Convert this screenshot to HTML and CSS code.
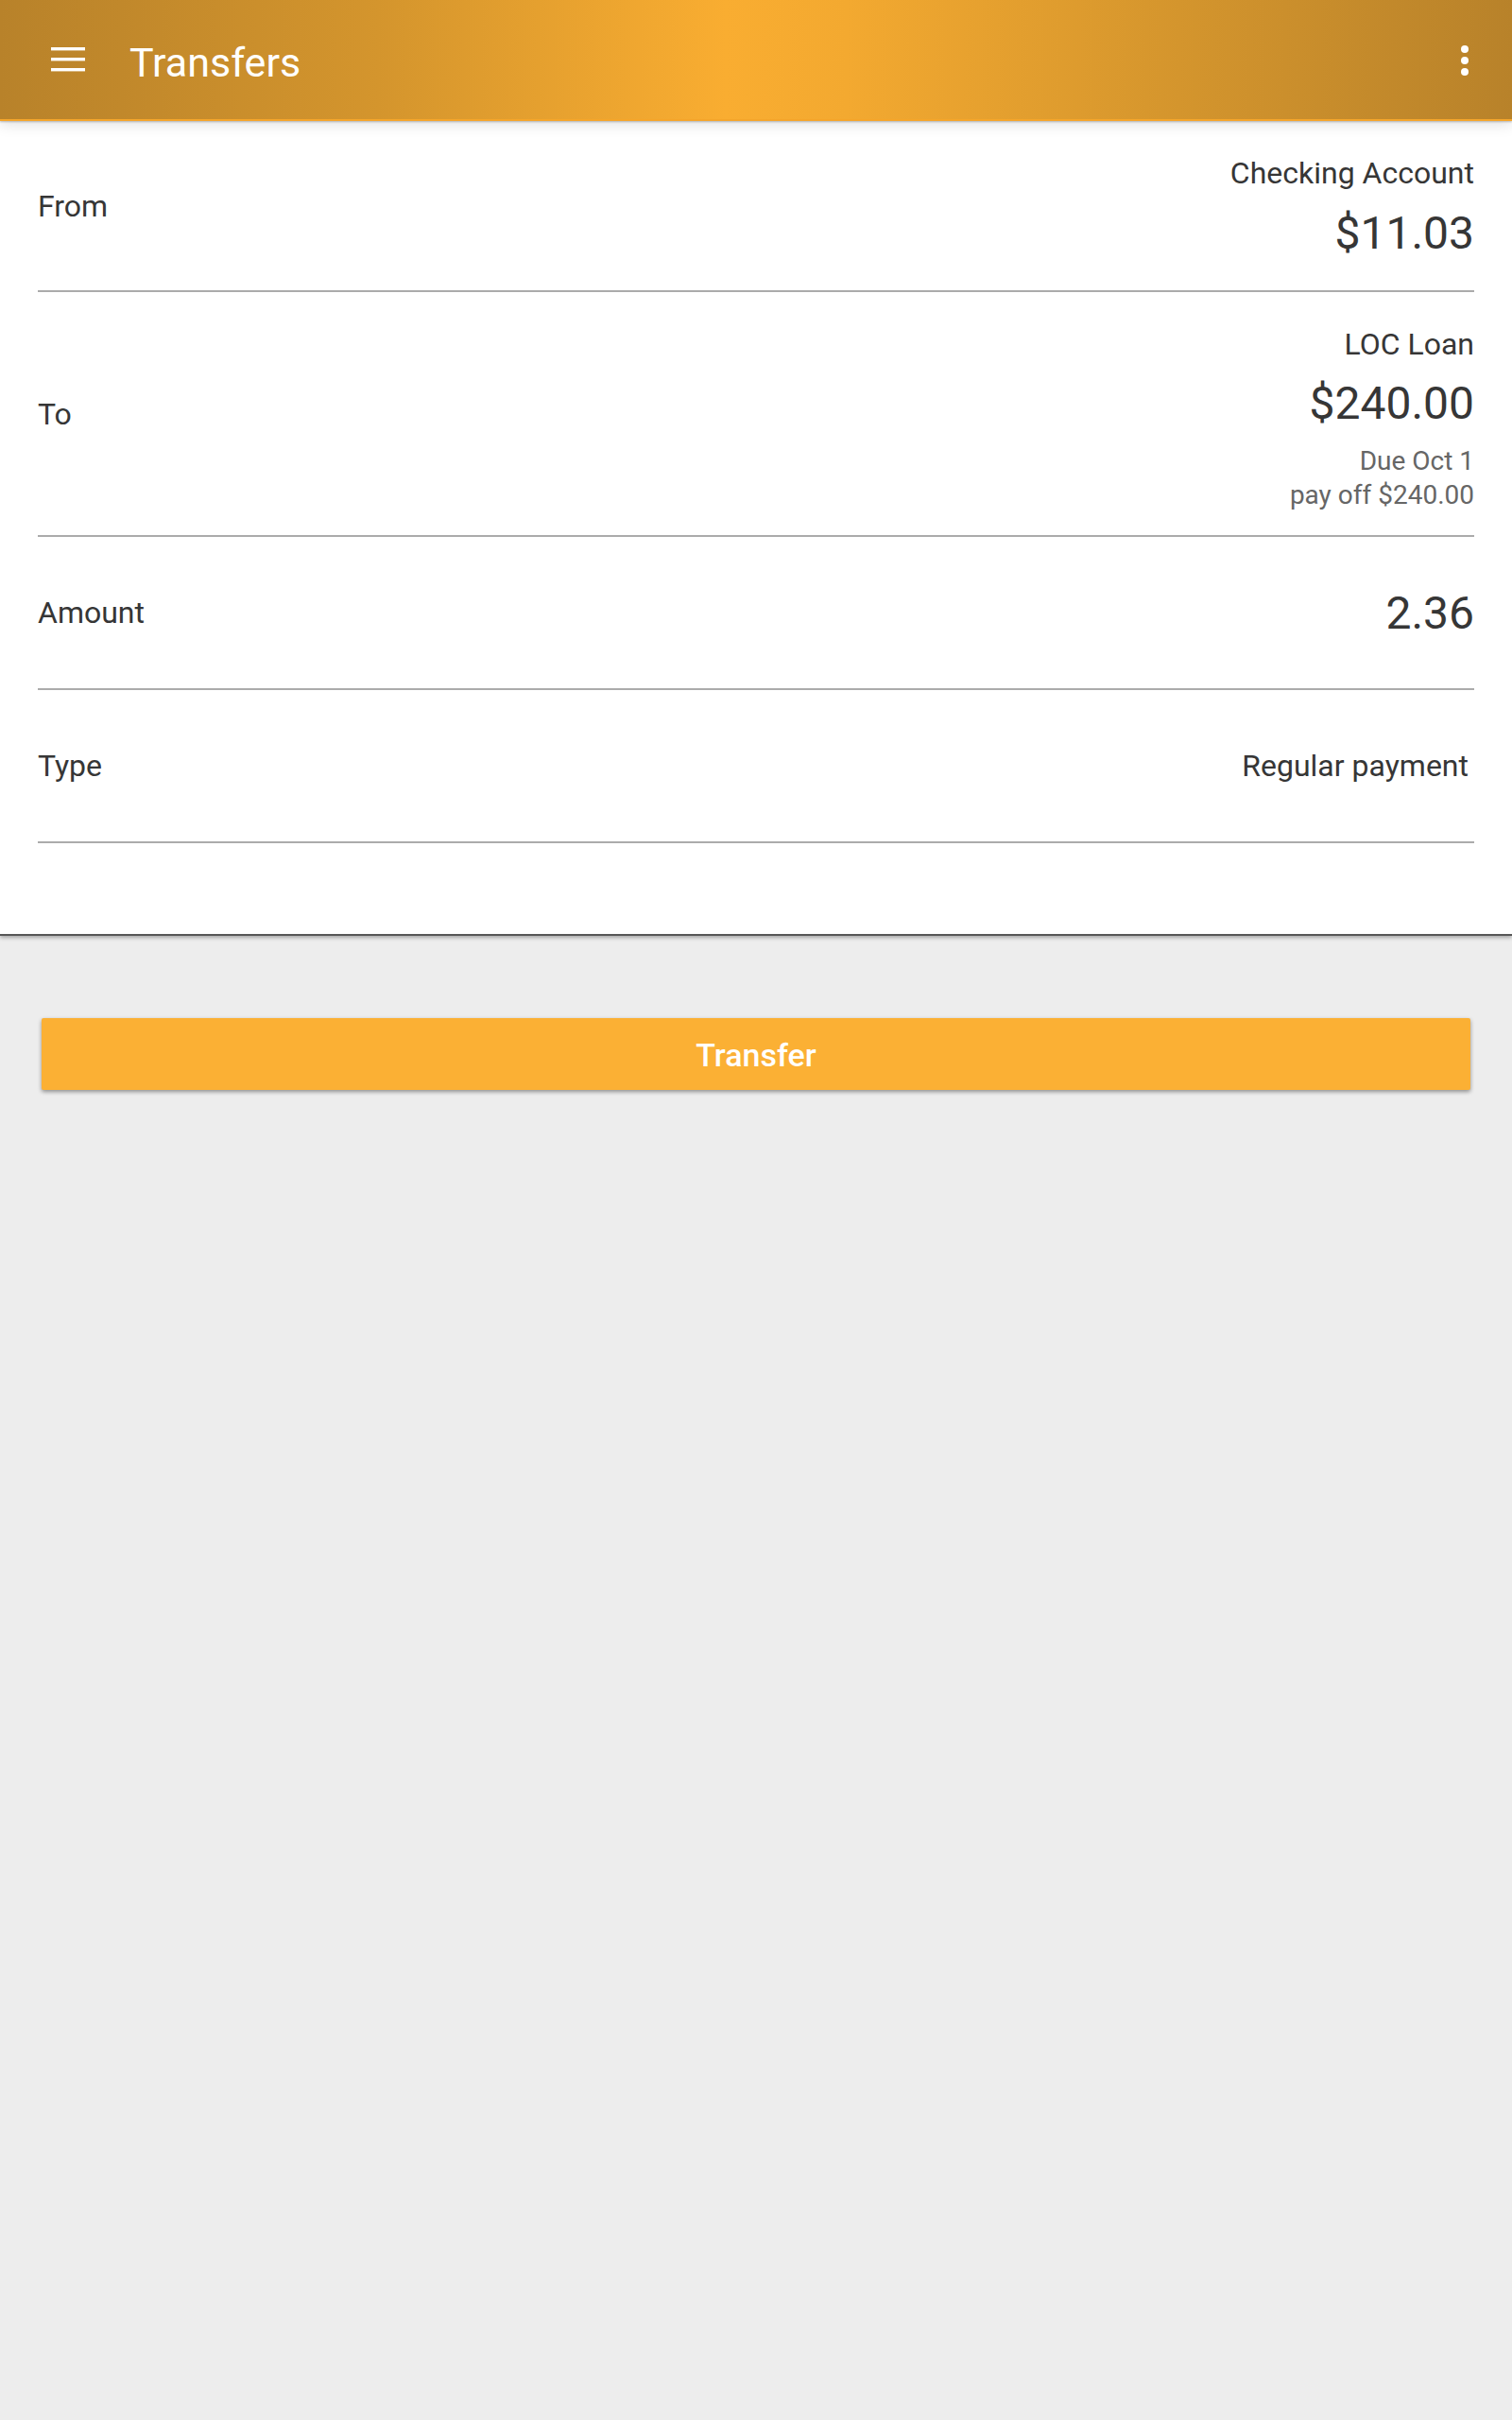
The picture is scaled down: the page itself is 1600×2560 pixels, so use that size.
FILE: index.html
```html
<!DOCTYPE html>
<html lang="en">
<head>
<meta charset="utf-8">
<title>Transfers</title>
<link rel="stylesheet" href="styles.css">
</head>
<body>
<header class="toolbar">
  <button class="icon-btn menu-btn" aria-label="Menu">
    <svg width="36" height="26" viewBox="0 0 36 26"><rect x="0" y="0" width="36" height="3.4" fill="#fff"/><rect x="0" y="11" width="36" height="3.4" fill="#fff"/><rect x="0" y="22" width="36" height="3.4" fill="#fff"/></svg>
  </button>
  <h1 class="title">Transfers</h1>
  <div class="spacer"></div>
  <button class="icon-btn more-btn" aria-label="More options">
    <svg width="8" height="32" viewBox="0 0 8 32"><circle cx="4" cy="4" r="4" fill="#fff"/><circle cx="4" cy="16" r="4" fill="#fff"/><circle cx="4" cy="28" r="4" fill="#fff"/></svg>
  </button>
</header>
<main class="content">
  <section class="form">
    <div class="row row-from">
      <span class="label">From</span>
      <div class="value value-from">
        <div class="acct">Checking Account</div>
        <div class="money">$11.03</div>
      </div>
    </div>
    <div class="row row-to">
      <span class="label">To</span>
      <div class="value value-to">
        <div class="acct">LOC Loan</div>
        <div class="money">$240.00</div>
        <div class="sub">
          <div>Due Oct 1</div>
          <div>pay off $240.00</div>
        </div>
      </div>
    </div>
    <div class="row row-amount">
      <span class="label">Amount</span>
      <div class="value amount-input">2.36</div>
    </div>
    <div class="row row-type">
      <span class="label">Type</span>
      <div class="value type-select">Regular payment</div>
    </div>
  </section>
  <div class="actions">
    <button class="transfer-btn">Transfer</button>
  </div>
</main>
</body>
</html>
```

FILE: styles.css
```css
* { box-sizing: border-box; }

html, body {
  margin: 0;
  padding: 0;
}

body {
  background: #ededed;
  font-family: Roboto, "Noto Sans", "Liberation Sans", sans-serif;
  color: #333333;
  min-height: 2560px;
}

.toolbar {
  position: relative;
  z-index: 2;
  height: 128px;
  display: flex;
  align-items: center;
  background: linear-gradient(90deg, #b8822a 0%, #d4952d 25%, #f9ad31 48%, #f3a930 56%, #d4952d 78%, #b8822a 100%);
  border-bottom: 2px solid #f5a52a;
  box-shadow: 0 1px 2px rgba(0, 0, 0, 0.25), 0 4px 14px rgba(0, 0, 0, 0.12);
}

.icon-btn {
  background: none;
  border: none;
  padding: 0;
  margin: 0;
  display: flex;
  align-items: center;
  justify-content: center;
  cursor: pointer;
}

.menu-btn {
  margin-left: 54px;
}

.menu-btn svg { display: block; }

.title {
  margin: 0 0 0 47px;
  padding-top: 5px;
  font-size: 43px;
  font-weight: 400;
  color: #ffffff;
  line-height: normal;
}

.spacer { flex: 1; }

.more-btn {
  margin-right: 46px;
  padding-top: 2px;
}

.more-btn svg { display: block; }

.form {
  position: relative;
  z-index: 1;
  background: #ffffff;
  padding: 0 40px 96px;
  border-bottom: 2px solid #575757;
  box-shadow: 0 2px 4px rgba(0, 0, 0, 0.3);
}

.row {
  display: flex;
  justify-content: space-between;
  align-items: center;
  border-bottom: 2px solid #ababab;
}

.row-from { height: 181px; }
.row-to { height: 259px; }
.row-amount { height: 162px; }
.row-type { height: 162px; }

.label {
  font-size: 32px;
  line-height: normal;
  color: #363636;
}

.value {
  text-align: right;
  color: #363636;
}

.value-from { padding-top: 4px; }
.value-to { padding-top: 12px; }

.acct {
  font-size: 32px;
  line-height: normal;
}

.money {
  font-size: 48px;
  line-height: normal;
  margin-top: 16px;
}

.value-to .money { margin-top: 15px; }

.sub {
  margin-top: 15px;
  font-size: 28px;
  line-height: 36px;
  color: #666666;
}

.amount-input {
  font-size: 48px;
  line-height: normal;
  margin-right: 0;
}

.type-select {
  font-size: 32px;
  line-height: normal;
  margin-right: 6px;
}

.actions {
  padding: 87px 44px 0;
}

.transfer-btn {
  display: block;
  width: 100%;
  height: 76px;
  padding-top: 2px;
  border: none;
  border-radius: 2px;
  background: #fbb034;
  color: #ffffff;
  font-family: Roboto, "Noto Sans", "Liberation Sans", sans-serif;
  font-size: 34px;
  font-weight: 500;
  box-shadow: 0 2px 4px rgba(0, 0, 0, 0.4);
  cursor: pointer;
}
```
